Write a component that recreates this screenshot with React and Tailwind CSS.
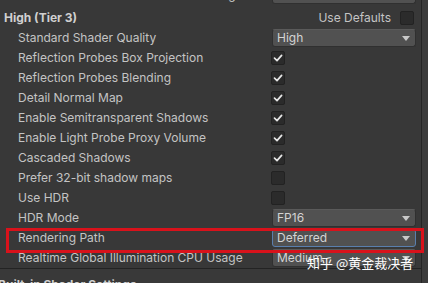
// Unity Graphics tier settings – High (Tier 3)

const ROWS = [
  { label: 'Standard Shader Quality', type: 'select', value: 'High' },
  { label: 'Reflection Probes Box Projection', type: 'check', value: true },
  { label: 'Reflection Probes Blending', type: 'check', value: true },
  { label: 'Detail Normal Map', type: 'check', value: true },
  { label: 'Enable Semitransparent Shadows', type: 'check', value: true },
  { label: 'Enable Light Probe Proxy Volume', type: 'check', value: true },
  { label: 'Cascaded Shadows', type: 'check', value: true },
  { label: 'Prefer 32-bit shadow maps', type: 'check', value: false },
  { label: 'Use HDR', type: 'check', value: false },
  { label: 'HDR Mode', type: 'select', value: 'FP16' },
  { label: 'Rendering Path', type: 'select', value: 'Deferred', focused: true },
  { label: 'Realtime Global Illumination CPU Usage', type: 'select', value: 'Medium' },
]

function Checkbox({ checked }) {
  return (
    <div className="w-[14px] h-[14px] rounded-[2px] bg-[#2b2b2b] border border-[#222] flex items-center justify-center">
      {checked && (
        <svg width="10" height="10" viewBox="0 0 10 10">
          <path d="M1.5 5.2 L4 7.6 L8.6 2.4" fill="none" stroke="#e6e6e6" strokeWidth="1.7" strokeLinecap="round" strokeLinejoin="round" />
        </svg>
      )}
    </div>
  )
}

function Select({ value, focused }) {
  return (
    <div
      className={`ml-px w-[144px] h-[18px] rounded-[3px] bg-[#515151] border flex items-center justify-between pl-[4px] pr-[5px] ${
        focused ? 'border-[#5a7fae]' : 'border-[#303030] border-t-[#5a5a5a]'
      }`}
    >
      <span className="text-[#d4d4d4] leading-none">{value}</span>
      <svg width="8" height="5" viewBox="0 0 8 5">
        <path d="M0 0 H8 L4 5 Z" fill="#c8c8c8" />
      </svg>
    </div>
  )
}

function Row({ row }) {
  return (
    <div className="h-[20px] shrink-0 flex items-center">
      <div className="w-[271px] pl-[18px] whitespace-nowrap text-[#c4c4c4]">{row.label}</div>
      {row.type === 'check' ? <Checkbox checked={row.value} /> : <Select value={row.value} focused={row.focused} />}
    </div>
  )
}

export default function App() {
  return (
    <div className="relative w-[428px] h-[283px] overflow-hidden bg-[#383838] text-[12px] font-['Inter','Noto_Sans',sans-serif]">
      <div className="flex h-full">
        <div className="flex-1 flex flex-col">
          {/* cut-off row from previous tier */}
          <div className="-mt-[15px] h-[20px] shrink-0 flex items-center">
            <div className="w-[271px] pl-[18px] whitespace-nowrap text-[#c4c4c4]">Realtime Global Illumination CPU Usage</div>
            <Select value="Low" />
          </div>

          {/* Tier header */}
          <div className="mt-[3px] h-[20px] shrink-0 flex items-center justify-between pl-[4px] pr-[7px]">
            <span className="font-bold text-[#d0d0d0]">High (Tier 3)</span>
            <div className="flex items-center gap-[9px]">
              <span className="text-[#c4c4c4]">Use Defaults</span>
              <Checkbox checked={false} />
            </div>
          </div>

          {ROWS.map((r) => (
            <Row key={r.label} row={r} />
          ))}

          {/* next section */}
          <div className="shrink-0 h-[40px] border-t border-[#232323] bg-[#393939]">
            <div className="mt-[7px] -ml-[2px] font-bold text-[#d0d0d0] whitespace-nowrap">Built-in Shader Settings</div>
          </div>
        </div>
        <div className="w-[7px] border-l border-[#242424] bg-[#3b3b3b]" />
      </div>

      {/* highlight box */}
      <div className="absolute left-[6px] top-[228px] w-[418px] h-[25px] border-[3px] border-[#d8121b]" />

      {/* watermark */}
      <div className="absolute left-[307px] top-[256px] text-[13px] leading-none text-white whitespace-nowrap font-['Noto_Sans_CJK_SC',sans-serif]">
        知乎 @黄金裁决者
      </div>
    </div>
  )
}
